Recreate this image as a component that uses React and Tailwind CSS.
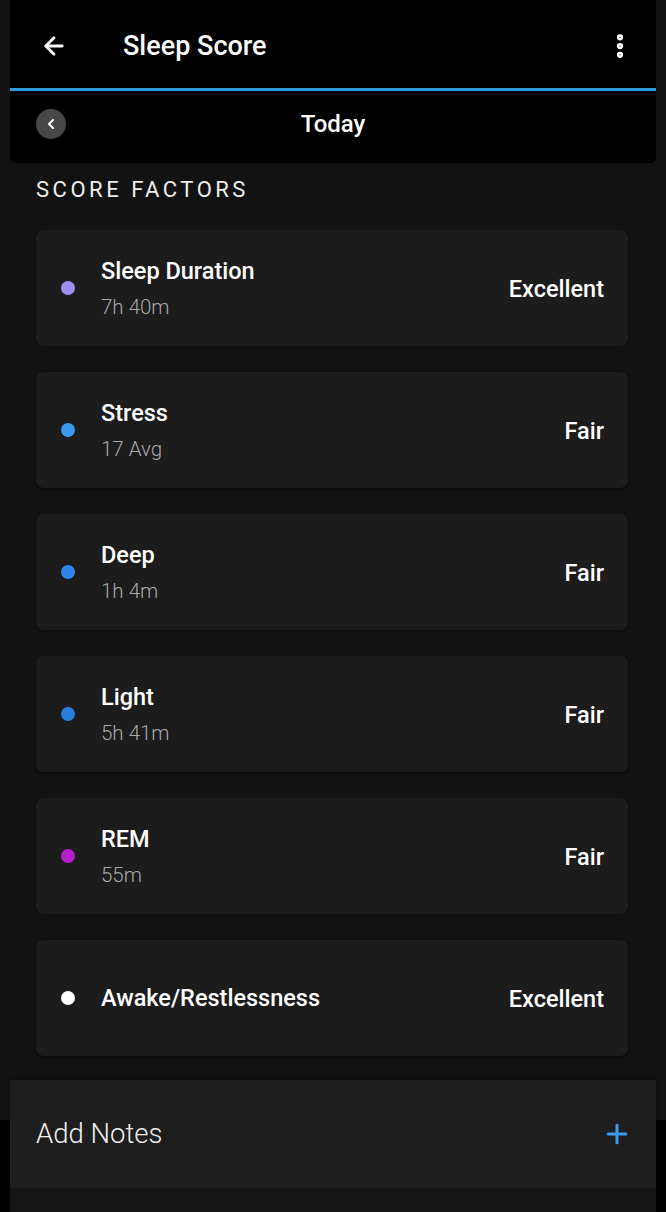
import { ArrowLeft, ChevronLeft, EllipsisVertical, Plus } from 'lucide-react';

const factors = [
    { name: 'Sleep Duration', value: '7h 40m', rating: 'Excellent', dot: 'bg-[#a08cf5]' },
    { name: 'Stress', value: '17 Avg', rating: 'Fair', dot: 'bg-[#3b9af0]' },
    { name: 'Deep', value: '1h 4m', rating: 'Fair', dot: 'bg-[#2f86e6]' },
    { name: 'Light', value: '5h 41m', rating: 'Fair', dot: 'bg-[#2a7fdc]' },
    { name: 'REM', value: '55m', rating: 'Fair', dot: 'bg-[#b21fc9]' },
    { name: 'Awake/Restlessness', value: null, rating: 'Excellent', dot: 'bg-white' },
];

const App = () => {
    return (
        <div className="min-h-screen bg-[#121212] text-white font-['Roboto',sans-serif]">
            {/* Header */}
            <div className="mx-[10px] bg-black rounded-b-md h-[163px] flex flex-col">
                <div className="h-[88px] flex items-center px-[30px] pt-[4px]">
                    <ArrowLeft className="w-[28px] h-[28px]" strokeWidth={2.4} />
                    <h1 className="ml-[55px] text-[27px] font-medium">Sleep Score</h1>
                    <EllipsisVertical className="ml-auto -mr-[9px] w-[30px] h-[30px]" strokeWidth={3} />
                </div>
                <div className="h-[3px] bg-[#2f9be0]" />
                <div className="flex-1 flex items-center px-[26px] pb-[6px]">
                    <div className="w-[30px] h-[30px] rounded-full bg-[#474747] flex items-center justify-center">
                        <ChevronLeft className="w-[16px] h-[16px]" strokeWidth={3} />
                    </div>
                    <span className="flex-1 text-center text-[24px] font-medium pr-[30px]">Today</span>
                </div>
            </div>

            {/* Score factors */}
            <div className="pl-[36px] pr-[38px] pt-[14px] pb-[24px]">
                <h2 className="text-[22px] tracking-[0.16em] text-[#eeeeee] leading-[26px]">SCORE FACTORS</h2>
                <div className="mt-[27px] flex flex-col gap-[26px]">
                    {factors.map((f) => (
                        <div key={f.name} className="h-[116px] rounded-lg bg-[#1c1c1c] shadow-[0_1px_3px_rgba(0,0,0,0.5)] flex items-center pl-[25px] pr-[24px]">
                            <span className={`w-[14px] h-[14px] rounded-full shrink-0 ${f.dot}`} />
                            <div className="ml-[26px] flex-1">
                                <p className="text-[23.5px] font-medium leading-[28px]">{f.name}</p>
                                {f.value && <p className="text-[20.5px] font-light text-[#a8a8a8] leading-[24px] mt-[10px]">{f.value}</p>}
                            </div>
                            <span className="text-[23.5px] font-medium pt-[3px]">{f.rating}</span>
                        </div>
                    ))}
                </div>
            </div>

            {/* Add notes */}
            <div className="px-[10px] bg-[linear-gradient(to_bottom,#121212_40px,#000_40px)]">
                <div className="h-[108px] bg-[#1e1e1e] flex items-center pl-[26px] pr-[24px] shadow-[0_-1px_3px_rgba(0,0,0,0.4)]">
                    <span className="text-[27.5px] font-light text-[#f0f0f0]">Add Notes</span>
                    <Plus className="ml-auto w-[30px] h-[30px] text-[#3c9af0]" strokeWidth={2.4} />
                </div>
                <div className="h-[40px] bg-[#141414]" />
            </div>
        </div>
    );
};

export default App;
